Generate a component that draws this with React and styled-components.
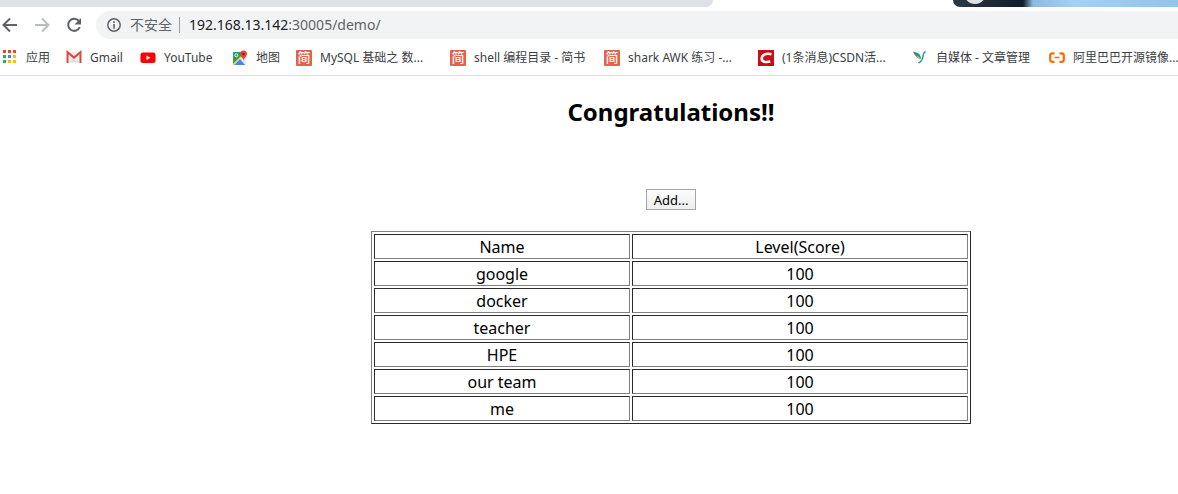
import React from 'react'
import styled, { createGlobalStyle } from 'styled-components'

const GlobalStyle = createGlobalStyle`
  * {
    box-sizing: border-box;
  }
  body {
    margin: 0;
    background: #fff;
    color: #000;
    font-family: 'Noto Sans', 'Noto Sans CJK SC', sans-serif;
    overflow-x: hidden;
  }
`

const TabStrip = styled.div`
  display: flex;
  justify-content: space-between;
  height: 7px;
  overflow: hidden;
`

const TabEdge = styled.div`
  flex: 0 1 713px;
  background: #dee1e6;
  border-radius: 0 0 8px 0;
`

const Wallpaper = styled.div`
  flex: 0 0 225px;
  display: flex;
  align-items: flex-end;
  padding: 0 0 3px 11px;
  background: linear-gradient(90deg, #2c3a46 0, #17232e 56px, #10202f 70px, #8fb9de 80px, #a4d0f4 120px, #93c4ec 225px);
  border-radius: 0 0 0 8px;
`

const Avatar = styled.span`
  width: 22px;
  height: 22px;
  border-radius: 50%;
  background: #dee1e6;
`

const Toolbar = styled.header`
  display: flex;
  align-items: center;
  padding-top: 4px;
`

const NavButton = styled.button`
  flex: 0 0 32px;
  height: 28px;
  padding: 0 0 0 2px;
  border: none;
  background: none;
  text-align: left;
  color: ${(props) => (props.$muted ? '#babcbe' : '#5f6368')};
  svg {
    display: block;
  }
`

const AddressBar = styled.div`
  flex: 1;
  display: flex;
  align-items: center;
  height: 28px;
  padding-left: 11px;
  background: #f1f3f4;
  border-radius: 14px 0 0 14px;
  font-size: 14px;
  line-height: 20px;
  color: #5f6368;
  svg {
    margin-right: 9px;
  }
`

const Warning = styled.span`
  padding-right: 7px;
  border-right: 1px solid #9a9da1;
  line-height: 16px;
  white-space: nowrap;
`

const Url = styled.a`
  margin-left: 9px;
  color: #5f6368;
  text-decoration: none;
  b {
    font-weight: 400;
    color: #202124;
  }
`

const Bookmarks = styled.nav`
  display: flex;
  height: 37px;
  padding-top: 1px;
  border-bottom: 1px solid #dadce0;
  overflow: hidden;
`

const Bookmark = styled.a`
  flex: 0 0 ${(props) => props.$width}px;
  display: flex;
  align-items: center;
  gap: 8px;
  padding-left: 2px;
  color: #3c4043;
  font-size: 12px;
  line-height: 18px;
  text-decoration: none;
  white-space: nowrap;
  svg {
    flex: none;
  }
`

const Favicon = styled.span`
  width: 16px;
  height: 16px;
  border-radius: 1px;
  background: #e2624b;
  color: #fff;
  font-size: 13px;
  font-weight: 500;
  line-height: 15px;
  text-align: center;
`

const Page = styled.main`
  display: flex;
  flex-direction: column;
  align-items: center;
  padding: 18px 0 64px 164px;
`

const Title = styled.h1`
  margin: 0 0 60px;
  font-size: 24px;
  line-height: 35px;
  font-weight: 700;
`

const AddButton = styled.button`
  width: 50px;
  height: 21px;
  margin-bottom: 21px;
  padding: 0;
  border: 1px solid #a6a6a6;
  background: linear-gradient(#fcfcfc, #eee);
  color: #000;
  font-family: inherit;
  font-size: 13px;
  line-height: 18px;
`

const ScoreTable = styled.table`
  width: 600px;
  table-layout: fixed;
  border: 1px solid;
  border-color: #808080 #2b2b2b #2b2b2b #808080;
  border-spacing: 2px;
  font-size: 16px;
  line-height: 21px;
  text-align: center;
`

const Cell = styled.td`
  padding: 2px 1px 0;
  border: 1px solid;
  border-color: #2b2b2b #808080 #808080 #2b2b2b;
  font-weight: 400;
  &:first-child {
    width: 256px;
  }
`

function BackIcon() {
  return (
    <svg width="16" height="16" viewBox="0 0 16 16" fill="none" stroke="currentColor" strokeWidth="2">
      <path d="M15 8H2M8 1.5L1.5 8L8 14.5" />
    </svg>
  )
}

function ForwardIcon() {
  return (
    <svg width="16" height="16" viewBox="0 0 16 16" fill="none" stroke="currentColor" strokeWidth="2">
      <path d="M1 8H14M8 1.5L14.5 8L8 14.5" />
    </svg>
  )
}

function ReloadIcon() {
  return (
    <svg width="16" height="16" viewBox="0 0 16 16">
      <path d="M12.8 4A6 6 0 1 0 13.8 10" fill="none" stroke="currentColor" strokeWidth="2" />
      <path d="M15 1v6.5H8.5z" fill="currentColor" />
    </svg>
  )
}

function InfoIcon() {
  return (
    <svg width="14" height="14" viewBox="0 0 14 14">
      <circle cx="7" cy="7" r="6.2" fill="none" stroke="#5f6368" strokeWidth="1.5" />
      <path d="M6.2 3.3h1.6v1.6H6.2zM6.2 6h1.6v4.7H6.2z" fill="#5f6368" />
    </svg>
  )
}

function AppsIcon() {
  const colors = ['#ea4335', '#ea4335', '#ea4335', '#34a853', '#4285f4', '#fbbc05', '#34a853', '#fbbc05', '#fbbc05']
  return (
    <svg width="16" height="16" viewBox="0 0 16 16">
      {colors.map((color, i) => (
        <rect key={i} x={1 + (i % 3) * 5} y={Math.floor(i / 3) * 5} width="3" height="3" fill={color} />
      ))}
    </svg>
  )
}

function GmailIcon() {
  return (
    <svg width="16" height="16" viewBox="0 0 16 16">
      <path d="M1 2h14v11H1z" fill="#eee" />
      <path d="M3 12l5-5 5 5z" fill="#e0e0e0" />
      <path d="M1.5 13V2.2L8 7.6l6.5-5.4V13" fill="none" stroke="#d54b3d" strokeWidth="2" />
    </svg>
  )
}

function YouTubeIcon() {
  return (
    <svg width="16" height="16" viewBox="0 0 16 16">
      <rect x="0.5" y="2.500" width="15" height="10.5" rx="2.5" fill="#f00" />
      <path d="M6.5 5.500v4.5l4-2.250z" fill="#fff" />
    </svg>
  )
}

function MapsIcon() {
  return (
    <svg width="16" height="16" viewBox="0 0 16 16">
      <path d="M1 2h13v13H1z" fill="#e8eaec" />
      <path d="M1 2h9v4L1 14z" fill="#2f9e5b" />
      <path d="M2 15L8 9l5 6z" fill="#4285f4" />
      <path d="M1 15L12 4" stroke="#fbd14b" strokeWidth="1.5" />
      <circle cx="4.3" cy="5.3" r="1.5" fill="none" stroke="#fff" />
      <path d="M11.5 0.5a3.5 3.5 0 0 1 3.5 3.5c0 2.5-2.5 3-3.5 6.5C10.5 7 8 6.5 8 4a3.5 3.5 0 0 1 3.5-3.5z" fill="#e0483b" />
      <circle cx="11.5" cy="4" r="1.2" fill="#8b1c1c" />
    </svg>
  )
}

function JianshuIcon() {
  return <Favicon>简</Favicon>
}

function CsdnIcon() {
  return (
    <svg width="16" height="16" viewBox="0 0 16 16">
      <path d="M0 0h16v16H0z" fill="#ca0c16" />
      <path d="M13.5 4.2C8 2.9 4 4.5 3.7 8.5c-.2 3.5 4 4 8.600 3" fill="none" stroke="#fff" strokeWidth="2.6" />
    </svg>
  )
}

function LeafIcon() {
  return (
    <svg width="16" height="16" viewBox="0 0 16 16">
      <path d="M1 1.500c5 1 8 2.500 7.800 7.500C5 8.500 3 6 1 1.500z" fill="#2b8a91" />
      <path d="M4 5c2.500 1 4 2 4.300 4C6.500 8.500 5 7.500 4 5z" fill="#b5b84a" />
      <path d="M13.500 1.500c-3 1.500-2 4-3 7-.8 2.500-2 3.500-4 4.500" fill="none" stroke="#3fa0a0" strokeWidth="1.6" />
    </svg>
  )
}

function AliyunIcon() {
  return (
    <svg width="16" height="16" viewBox="0 0 16 16" fill="none" stroke="#ff6a00" strokeWidth="2.200">
      <path d="M5.500 3.300H3.500Q1.200 3.300 1.200 5.500v4q0 2.300 2.300 2.300h2M10.500 3.300h2Q14.800 3.300 14.800 5.500v4q0 2.300-2.300 2.300h-2" />
      <path d="M5.500 7.500h5" strokeWidth="1.500" />
    </svg>
  )
}

const bookmarks = [
  { label: '应用', icon: AppsIcon, width: 64 },
  { label: 'Gmail', icon: GmailIcon, width: 74 },
  { label: 'YouTube', icon: YouTubeIcon, width: 92 },
  { label: '地图', icon: MapsIcon, width: 64 },
  { label: 'MySQL 基础之 数...', icon: JianshuIcon, width: 154 },
  { label: 'shell 编程目录 - 简书', icon: JianshuIcon, width: 154 },
  { label: 'shark AWK 练习 -...', icon: JianshuIcon, width: 154 },
  { label: '(1条消息)CSDN活...', icon: CsdnIcon, width: 154 },
  { label: '自媒体 - 文章管理', icon: LeafIcon, width: 137 },
  { label: '阿里巴巴开源镜像...', icon: AliyunIcon, width: 154 },
]

const scores = [
  ['google', 100],
  ['docker', 100],
  ['teacher', 100],
  ['HPE', 100],
  ['our team', 100],
  ['me', 100],
]

function Browser() {
  return (
    <>
      <TabStrip>
        <TabEdge />
        <Wallpaper>
          <Avatar />
        </Wallpaper>
      </TabStrip>
      <Toolbar>
        <NavButton aria-label="Back">
          <BackIcon />
        </NavButton>
        <NavButton aria-label="Forward" $muted>
          <ForwardIcon />
        </NavButton>
        <NavButton aria-label="Reload">
          <ReloadIcon />
        </NavButton>
        <AddressBar>
          <InfoIcon />
          <Warning>不安全</Warning>
          <Url href="#">
            <b>192.168.13.142</b>:30005/demo/
          </Url>
        </AddressBar>
      </Toolbar>
      <Bookmarks>
        {bookmarks.map(({ label, icon: Icon, width }) => (
          <Bookmark href="#" key={label} $width={width}>
            <Icon />
            {label}
          </Bookmark>
        ))}
      </Bookmarks>
    </>
  )
}

function App() {
  return (
    <>
      <GlobalStyle />
      <Browser />
      <Page>
        <Title>Congratulations!!</Title>
        <AddButton>Add...</AddButton>
        <ScoreTable>
          <thead>
            <tr>
              <Cell as="th">Name</Cell>
              <Cell as="th">Level(Score)</Cell>
            </tr>
          </thead>
          <tbody>
            {scores.map(([name, score]) => (
              <tr key={name}>
                <Cell>{name}</Cell>
                <Cell>{score}</Cell>
              </tr>
            ))}
          </tbody>
        </ScoreTable>
      </Page>
    </>
  )
}

export default App
